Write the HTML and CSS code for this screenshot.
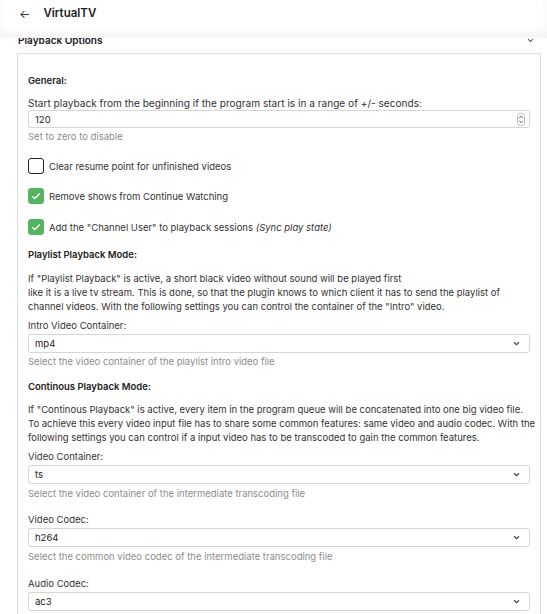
FILE: index.html
```html
<!DOCTYPE html>
<html>
<head>
<meta charset="utf-8">
<link rel="stylesheet" href="styles.css">
</head>
<body>
<header class="topbar">
  <span class="back">&#8592;</span>
  <span class="title">VirtualTV</span>
</header>
<main class="page">
  <div class="section-head">
    <span class="section-title">Playback Options</span>
    <svg class="chev" width="7" height="5" viewBox="0 0 7 5"><path d="M1 1.2 L3.5 3.6 L6 1.2" fill="none" stroke="#555" stroke-width="1.1"/></svg>
  </div>
  <div class="panel">
    <div class="heading">General:</div>
    <div class="label big gap-s">Start playback from the beginning if the program start is in a range of +/- seconds:</div>
    <div class="field number">
      <span>120</span>
      <span class="spin">
        <svg width="8" height="13" viewBox="0 0 8 13"><rect x="0.5" y="0.5" width="7" height="12" rx="3" fill="#fff" stroke="#bbb"/><path d="M2.3 5 L4 3.3 L5.7 5" fill="none" stroke="#444" stroke-width="0.9"/><path d="M2.3 8 L4 9.7 L5.7 8" fill="none" stroke="#444" stroke-width="0.9"/></svg>
      </span>
    </div>
    <div class="help first-help">Set to zero to disable</div>

    <div class="check first">
      <span class="box"></span>
      <span>Clear resume point for unfinished videos</span>
    </div>
    <div class="check second">
      <span class="box on"><svg width="10" height="8" viewBox="0 0 10 8"><path d="M1.3 4.2 L3.8 6.5 L8.7 1.4" fill="none" stroke="#fff" stroke-width="1.4"/></svg></span>
      <span>Remove shows from Continue Watching</span>
    </div>
    <div class="check">
      <span class="box on"><svg width="10" height="8" viewBox="0 0 10 8"><path d="M1.3 4.2 L3.8 6.5 L8.7 1.4" fill="none" stroke="#fff" stroke-width="1.4"/></svg></span>
      <span>Add the "Channel User" to playback sessions <em>(Sync play state)</em></span>
    </div>

    <div class="heading gap-h">Playlist Playback Mode:</div>
    <p class="para first-para">If "Playlist Playback" is active, a short black video without sound will be played first<br>like it is a live tv stream. This is done, so that the plugin knows to which client it has to send the playlist of<br>channel videos. With the following settings you can control the container of the "Intro" video.</p>
    <div class="label gap-m">Intro Video Container:</div>
    <div class="field select"><span>mp4</span><svg class="dd" width="7" height="5" viewBox="0 0 7 5"><path d="M1 1.2 L3.5 3.6 L6 1.2" fill="none" stroke="#444" stroke-width="1.2"/></svg></div>
    <div class="help intro-help">Select the video container of the playlist intro video file</div>

    <div class="heading gap-h2">Continous Playback Mode:</div>
    <p class="para">If "Continous Playback" is active, every item in the program queue will be concatenated into one big video file.<br>To achieve this every video input file has to share some common features: same video and audio codec. With the<br>following settings you can control if a input video has to be transcoded to gain the common features.</p>
    <div class="label gap-m2">Video Container:</div>
    <div class="field select"><span>ts</span><svg class="dd" width="7" height="5" viewBox="0 0 7 5"><path d="M1 1.2 L3.5 3.6 L6 1.2" fill="none" stroke="#444" stroke-width="1.2"/></svg></div>
    <div class="help">Select the video container of the intermediate transcoding file</div>
    <div class="label gap-l">Video Codec:</div>
    <div class="field select"><span>h264</span><svg class="dd" width="7" height="5" viewBox="0 0 7 5"><path d="M1 1.2 L3.5 3.6 L6 1.2" fill="none" stroke="#444" stroke-width="1.2"/></svg></div>
    <div class="help">Select the common video codec of the intermediate transcoding file</div>
    <div class="label gap-l2">Audio Codec:</div>
    <div class="field select"><span>ac3</span><svg class="dd" width="7" height="5" viewBox="0 0 7 5"><path d="M1 1.2 L3.5 3.6 L6 1.2" fill="none" stroke="#444" stroke-width="1.2"/></svg></div>
  </div>
</main>
</body>
</html>
```
FILE: styles.css
```css
html, body {
  margin: 0;
  padding: 0;
  background: #fff;
  height: 614px;
  overflow: hidden;
}
body {
  font-family: Inter, "Liberation Sans", sans-serif;
  font-size: 9.5px;
  color: #2b2b2b;
}
.topbar {
  position: fixed;
  top: 0;
  left: 0;
  right: 0;
  height: 38px;
  background: #fff;
  box-shadow: 0 -6px 8px rgba(0, 0, 0, 0.045) inset;
  display: flex;
  align-items: center;
  padding: 0 0 12px 19px;
  box-sizing: border-box;
  z-index: 2;
}
.back {
  font-size: 12px;
  color: #333;
  margin-right: 13px;
}
.title {
  font-size: 11.5px;
  font-weight: 600;
  color: #222;
}
.page {
  padding: 31px 6px 0 17px;
}
.section-head {
  display: flex;
  justify-content: space-between;
  align-items: center;
  height: 18px;
  padding: 0 7px 0 1px;
}
.section-title {
  font-weight: 600;
  font-size: 10px;
  color: #222;
}
.panel {
  margin-top: 4px;
  border: 1px solid #dcdcdc;
  padding: 20px 10px 10px 10px;
}
.heading {
  font-weight: 600;
  line-height: 14px;
  color: #222;
}
.label {
  line-height: 14px;
  color: #333;
}
.label.big {
  font-size: 10.1px;
}
.gap-s { margin-top: 8px; }
.gap-m { margin-top: 5px; }
.gap-m2 { margin-top: 5px; }
.gap-l { margin-top: 12px; }
.gap-l2 { margin-top: 13px; }
.gap-h { margin-top: 13px; }
.gap-h2 { margin-top: 11px; }
.field {
  margin-top: 0;
  height: 18px;
  box-sizing: border-box;
  border: 1px solid #d6d6d6;
  border-radius: 3px;
  display: flex;
  align-items: center;
  justify-content: space-between;
  padding: 0 4px 0 6px;
  color: #222;
}
.select {
  margin-top: 1px;
  height: 19px;
  padding-right: 9px;
}
.spin {
  display: flex;
}
.help {
  margin-top: 3px;
  line-height: 14px;
  color: #8d8d8d;
}
.help.first-help,
.help.intro-help {
  margin-top: 2px;
}
.check {
  display: flex;
  align-items: center;
  gap: 5px;
  height: 16px;
  margin-top: 15px;
  color: #333;
}
.check.first { margin-top: 14px; }
.check.second { margin-top: 14px; }
.box {
  width: 16px;
  height: 16px;
  box-sizing: border-box;
  border: 1px solid #222;
  border-radius: 3px;
  display: flex;
  align-items: center;
  justify-content: center;
}
.box.on {
  background: #55b45e;
  border-color: #55b45e;
}
.para {
  margin: 9px 0 0 0;
  line-height: 14px;
  color: #333;
  white-space: nowrap;
}
.para.first-para {
  margin-top: 10px;
}
```
